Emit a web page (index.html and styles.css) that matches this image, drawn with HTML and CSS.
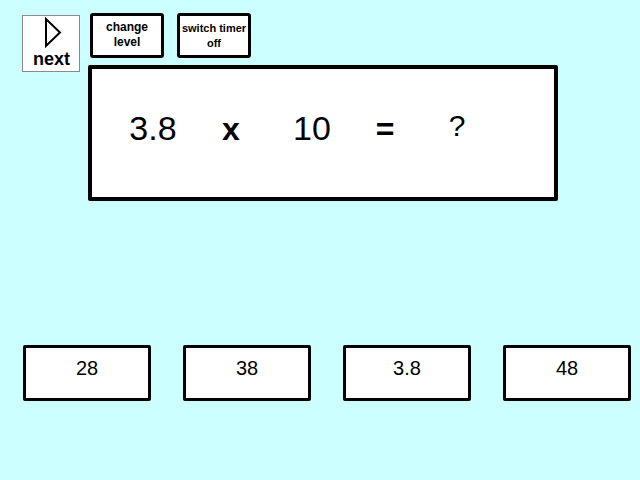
FILE: index.html
```html
<!DOCTYPE html>
<html>
<head>
<meta charset="utf-8">
<link rel="stylesheet" href="styles.css">
</head>
<body>
<div class="page">
  <div class="toolbar">
    <div class="next-btn">
      <svg class="next-icon" width="56" height="33" viewBox="0 0 56 33">
        <path d="M23 3 L23 30 L37 16.5 Z" fill="none" stroke="#000" stroke-width="2" stroke-linejoin="miter"/>
      </svg>
      <div class="next-label">next</div>
    </div>
    <div class="tool-btn change">change<br>level</div>
    <div class="tool-btn timer">switch timer<br>off</div>
  </div>
  <div class="question">
    <span class="term">3.8</span>
    <span class="term op">x</span>
    <span class="term">10</span>
    <span class="term op">=</span>
    <span class="term qmark">?</span>
  </div>
  <div class="answers">
    <div class="answer">28</div>
    <div class="answer">38</div>
    <div class="answer">3.8</div>
    <div class="answer">48</div>
  </div>
</div>
</body>
</html>
```

FILE: styles.css
```css
html, body {
  margin: 0;
  padding: 0;
  background: #ccffff;
  font-family: "Liberation Sans", Arial, sans-serif;
  color: #000;
}
.page {
  width: 640px;
  height: 480px;
  padding-top: 13px;
  box-sizing: border-box;
}
.toolbar {
  display: flex;
  align-items: flex-start;
  height: 52px;
  margin-left: 22px;
}
.next-btn {
  box-sizing: border-box;
  width: 58px;
  height: 57px;
  margin-top: 2px;
  border: 1px solid #8a8a8a;
  background: #fff;
}
.next-icon {
  display: block;
}
.next-label {
  font-size: 18px;
  font-weight: bold;
  line-height: 20px;
  text-align: center;
  margin-left: 1px;
}
.tool-btn {
  box-sizing: border-box;
  width: 74px;
  height: 45px;
  border: 3px solid #000;
  border-radius: 3px;
  background: #fff;
  font-weight: bold;
  text-align: center;
}
.change {
  margin-left: 10px;
  font-size: 12px;
  line-height: 15px;
  padding-top: 4px;
}
.timer {
  margin-left: 13px;
  font-size: 11px;
  line-height: 14.5px;
  padding-top: 5px;
}
.question {
  box-sizing: border-box;
  width: 470px;
  height: 136px;
  margin-left: 88px;
  border: 4px solid #000;
  border-radius: 2px;
  background: #fff;
  display: grid;
  grid-template-columns: 78px 78px 84px 62px 82px;
  align-items: baseline;
  padding-top: 39px;
  padding-left: 22px;
}
.term {
  font-size: 34px;
  line-height: 40px;
  text-align: center;
}
.op {
  font-weight: bold;
  font-size: 32px;
}
.qmark {
  font-size: 30px;
  line-height: 35px;
  align-self: start;
}
.answers {
  display: flex;
  gap: 32px;
  margin-top: 144px;
  margin-left: 23px;
}
.answer {
  box-sizing: border-box;
  width: 128px;
  height: 56px;
  border: 3px solid #000;
  border-radius: 2px;
  background: #fff;
  font-size: 20px;
  line-height: 23px;
  padding-top: 9px;
  text-align: center;
}
```
